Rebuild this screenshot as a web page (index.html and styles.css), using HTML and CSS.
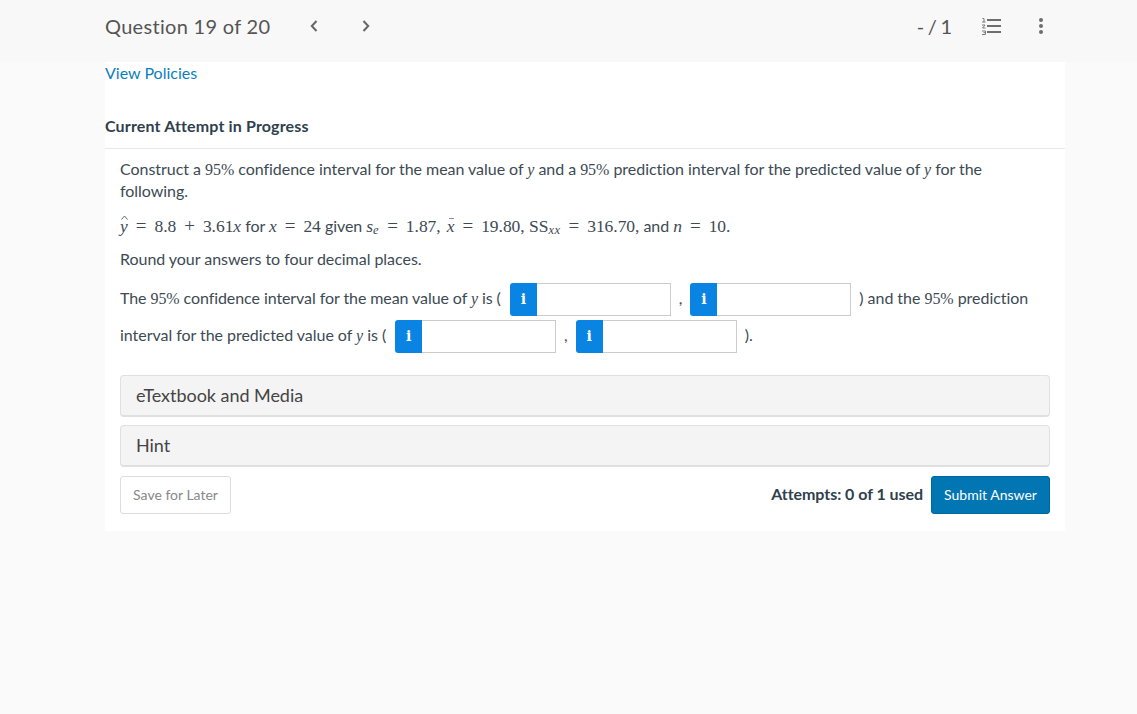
FILE: index.html
```html
<!DOCTYPE html>
<html lang="en">

<head>
    <meta charset="UTF-8">
    <title>Question 19 of 20</title>
    <link rel="stylesheet" href="styles.css">
</head>

<body>
    <header class="top-bar">
        <div class="top-left">
            <span class="question-count">Question 19 of 20</span>
            <div class="question-nav">
                <svg class="chevron" width="10" height="14" viewBox="0 0 10 14"><path d="M7.5 2 L2.8 7 L7.5 12" /></svg>
                <svg class="chevron" width="10" height="14" viewBox="0 0 10 14"><path d="M2.5 2 L7.2 7 L2.5 12" /></svg>
            </div>
        </div>
        <div class="top-right">
            <span class="score">- / 1</span>
            <svg class="list-icon" width="20" height="18" viewBox="0 0 20 18">
                <rect x="5" y="2" width="14" height="2" />
                <rect x="5" y="8" width="14" height="2" />
                <rect x="5" y="14" width="14" height="2" />
                <path class="list-num" d="M0.5 1.5 H2 V5 M0 5 H3.5 M0 8 H3 L0.5 11 H3.5 M0 14 H3.5 V17.5 H0 M1.5 15.7 H3.5" />
            </svg>
            <svg class="more-icon" width="6" height="18" viewBox="0 0 6 18">
                <circle cx="3" cy="3" r="2" />
                <circle cx="3" cy="9" r="2" />
                <circle cx="3" cy="15" r="2" />
            </svg>
        </div>
    </header>

    <main class="card">
        <a class="policies" href="#">View Policies</a>
        <h2 class="attempt-title">Current Attempt in Progress</h2>

        <div class="question">
            <p class="intro">Construct a <span class="math">95%</span> confidence interval for the mean value of <i class="math">y</i> and a <span class="math">95%</span> prediction interval for the predicted value of <i class="math">y</i> for the<br>following.</p>

            <p class="formula"><span class="accent-wrap"><i class="math">y</i><svg class="hat" width="7" height="5" viewBox="0 0 7 5"><path d="M0.5 4.5 L3.5 1 L6.5 4.5" /></svg></span><span class="math"><span class="op">=</span>8.8<span class="op">+</span>3.61<i>x</i></span> for <span class="math"><i>x</i><span class="op">=</span>24</span> given <span class="math"><i>s</i><sub class="sub"><i>e</i></sub><span class="op">=</span>1.87,</span> <span class="accent-wrap x-bar"><i class="math">x</i><span class="bar"></span></span><span class="math"><span class="op">=</span>19.80, SS<sub class="sub"><i>xx</i></sub><span class="op">=</span>316.70,</span> and <span class="math"><i>n</i><span class="op">=</span>10.</span></p>

            <p class="round">Round your answers to four decimal places.</p>

            <div class="answers">
                <div class="answer-row">
                    <span class="lead-long">The <span class="math">95%</span> confidence interval for the mean value of <i class="math">y</i> is (</span>
                    <span class="answer"><span class="info-btn">i</span><input class="answer-input" type="text"></span>
                    <span class="sep">,</span>
                    <span class="answer"><span class="info-btn">i</span><input class="answer-input" type="text"></span>
                    <span class="after">) and the <span class="math">95%</span> prediction</span>
                </div>
                <div class="answer-row">
                    <span>interval for the predicted value of <i class="math">y</i> is (</span>
                    <span class="answer"><span class="info-btn">i</span><input class="answer-input" type="text"></span>
                    <span class="sep">,</span>
                    <span class="answer"><span class="info-btn">i</span><input class="answer-input" type="text"></span>
                    <span class="after">).</span>
                </div>
            </div>

            <div class="panel">eTextbook and Media</div>
            <div class="panel">Hint</div>

            <div class="actions">
                <button class="save-btn">Save for Later</button>
                <div class="submit-group">
                    <span class="attempts">Attempts: 0 of 1 used</span>
                    <button class="submit-btn">Submit Answer</button>
                </div>
            </div>
        </div>
    </main>
</body>

</html>
```

FILE: styles.css
```css
* {
    margin: 0;
    padding: 0;
    box-sizing: border-box;
}

body {
    font-family: 'Lato', sans-serif;
    background-color: #fafafa;
    color: #3d4a54;
    font-size: 16px;
}

.top-bar {
    height: 62px;
    background-color: #f8f8f8;
    padding: 0 93px 10px 105px;
    display: flex;
    justify-content: space-between;
    align-items: center;
}

.top-left,
.top-right {
    display: flex;
    align-items: center;
}

.question-count {
    font-size: 20px;
    letter-spacing: 0.3px;
    color: #555;
}

.question-nav {
    display: flex;
    gap: 42px;
    margin-left: 39px;
}

.chevron path {
    fill: none;
    stroke: #666;
    stroke-width: 2;
}

.score {
    font-size: 20px;
    word-spacing: -1.5px;
    color: #555;
}

.list-icon {
    margin-left: 30px;
    fill: #6e6e6e;
}

.list-num {
    fill: none;
    stroke: #6e6e6e;
    stroke-width: 0.9;
}

.more-icon {
    margin-left: 36px;
    fill: #6e6e6e;
}

.card {
    width: 960px;
    margin-left: 105px;
    background-color: white;
    height: 469px;
}

.policies {
    display: block;
    font-size: 16px;
    line-height: 22px;
    color: #0b7fbd;
    text-decoration: none;
}

.attempt-title {
    font-size: 16px;
    font-weight: 700;
    line-height: 22px;
    letter-spacing: 0.15px;
    color: #2f3f4d;
    margin-top: 31px;
    padding-bottom: 11px;
    border-bottom: 1px solid #e8e8e8;
}

.question {
    padding: 9px 15px 0;
    letter-spacing: -0.04px;
}

.math {
    font-family: 'Liberation Serif', serif;
    font-size: 16px;
    line-height: 1;
}

.intro {
    line-height: 22px;
}

.formula {
    margin-top: 13px;
    line-height: 22px;
}

.formula .math {
    font-size: 17.5px;
}

.op {
    margin: 0 8px;
    font-size: 19px;
    line-height: 1;
}

.sub {
    font-size: 12.5px;
    line-height: 0;
    letter-spacing: 0.5px;
    vertical-align: -2px;
}

.accent-wrap {
    position: relative;
    display: inline-block;
}

.x-bar {
    margin-left: 2px;
}

.hat {
    position: absolute;
    left: 1px;
    top: 0;
    fill: none;
    stroke: #3d4a54;
    stroke-width: 0.8;
}

.bar {
    position: absolute;
    left: 2px;
    top: 3px;
    width: 5px;
    border-top: 1px solid #8a929a;
}

.round {
    margin-top: 11px;
    line-height: 22px;
}

.answers {
    margin-top: 9px;
}

.answer-row {
    height: 37px;
    display: flex;
    align-items: center;
}

.lead-long {
    letter-spacing: -0.08px;
}

.answer {
    display: flex;
    height: 33px;
    margin-left: 9px;
    margin-top: 4px;
}

.sep + .answer {
    margin-left: 0;
}

.info-btn {
    width: 27px;
    background-color: #0a84e3;
    color: white;
    border-radius: 3px 0 0 3px;
    font-family: 'DejaVu Serif', serif;
    font-weight: 700;
    font-size: 14px;
    line-height: 33px;
    text-align: center;
}

.answer-input {
    width: 134px;
    height: 33px;
    border: 1px solid #ccc;
    border-left: none;
    outline: none;
}

.sep {
    width: 19.5px;
    text-align: center;
}

.after {
    margin-left: 8px;
}

.panel {
    height: 42px;
    line-height: 38px;
    padding-left: 15px;
    font-size: 18px;
    color: #444;
    background-color: #f4f4f4;
    border: 1px solid #e0e0e0;
    border-bottom-width: 2px;
    border-radius: 4px;
    margin-bottom: 8px;
}

.answers + .panel {
    margin-top: 22px;
}

.actions {
    display: flex;
    justify-content: space-between;
    margin-top: 9px;
}

.save-btn {
    width: 111px;
    height: 38px;
    padding-bottom: 2px;
    font-family: 'Lato', sans-serif;
    font-size: 14px;
    letter-spacing: 0;
    color: #888;
    background-color: white;
    border: 1px solid #ddd;
    border-radius: 3px;
}

.submit-group {
    display: flex;
    align-items: center;
    gap: 8px;
}

.attempts {
    font-size: 16px;
    font-weight: 700;
    color: #2f3f4d;
    margin-top: -3px;
}

.submit-btn {
    width: 119px;
    height: 38px;
    padding-bottom: 2px;
    font-family: 'Lato', sans-serif;
    font-size: 14px;
    color: white;
    background-color: #0275b3;
    border: 1px solid #02669c;
    border-radius: 3px;
}
```
